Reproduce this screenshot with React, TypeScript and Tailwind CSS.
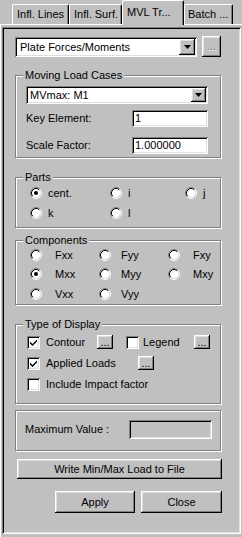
import React from "react";

const raised =
  "shadow-[inset_-1px_-1px_0_#000,inset_1px_1px_0_#fff,inset_-2px_-2px_0_#808080,inset_2px_2px_0_#dfdfdf]";
const sunken =
  "shadow-[inset_1px_1px_0_#808080,inset_-1px_-1px_0_#fff,inset_2px_2px_0_#000,inset_-2px_-2px_0_#dfdfdf]";
const etched = "border border-[#808080] shadow-[inset_1px_1px_0_#fff,1px_1px_0_#fff]";

function Radio({ checked }: { checked?: boolean }) {
  return (
    <svg width="12" height="12" viewBox="0 0 12 12" className="shrink-0 block">
      <circle cx="6" cy="6" r="4.5" fill="#fff" />
      <path d="M2.11 9.89A5.5 5.5 0 0 1 9.89 2.11" stroke="#808080" fill="none" />
      <path d="M2.82 9.18A4.5 4.5 0 0 1 9.18 2.82" stroke="#000" fill="none" />
      <path d="M9.89 2.11A5.5 5.5 0 0 1 2.11 9.89" stroke="#fff" fill="none" />
      <path d="M9.18 2.82A4.5 4.5 0 0 1 2.82 9.18" stroke="#dfdfdf" fill="none" />
      {checked && <circle cx="6" cy="6" r="2" fill="#000" />}
    </svg>
  );
}

function Check({ checked }: { checked?: boolean }) {
  return (
    <div className={`w-[13px] h-[13px] bg-white shrink-0 relative ${sunken}`}>
      {checked && (
        <svg className="absolute left-[3px] top-[3px]" width="7" height="7" viewBox="0 0 7 7">
          <path d="M0 2.5L2.5 5L7 0.5V2.5L2.5 7L0 4.5Z" fill="#000" />
        </svg>
      )}
    </div>
  );
}

function Arrow() {
  return (
    <svg width="7" height="4" viewBox="0 0 7 4" className="block">
      <polygon points="0,0 7,0 3.5,4" fill="#000" />
    </svg>
  );
}

function Dots({ disabled }: { disabled?: boolean }) {
  return (
    <span className={disabled ? "text-[#808080] [text-shadow:1px_1px_0_#fff]" : "text-black"}>...</span>
  );
}

function Group({
  label,
  className,
  children,
}: {
  label?: string;
  className: string;
  children: React.ReactNode;
}) {
  return (
    <div className={`relative w-[206px] ${etched} ${className}`}>
      {label && (
        <span className="absolute left-[7px] top-[-7px] px-[2px] bg-[#c0c0c0] leading-[13px]">{label}</span>
      )}
      {children}
    </div>
  );
}

export default function App() {
  return (
    <div className="w-[242px] h-[537px] bg-[#c0c0c0] overflow-hidden text-black text-[11px] leading-[13px] font-['Liberation_Sans',Arial,sans-serif]">
      {/* Tabs */}
      <div className="h-[24px] flex items-end pl-[12px]">
        <div className="h-[20px] w-[57px] border-t border-l border-white border-r border-r-black rounded-tl-[2px] rounded-tr-[2px] shadow-[inset_-1px_0_0_#808080] flex items-center pl-[4px] whitespace-nowrap">
          Infl. Lines
        </div>
        <div className="h-[20px] w-[53px] border-t border-l border-white border-r border-r-black rounded-tl-[2px] rounded-tr-[2px] shadow-[inset_-1px_0_0_#808080] flex items-center pl-[4px] whitespace-nowrap">
          Infl. Surf.
        </div>
        <div className="relative z-10 h-[25px] w-[62px] mb-[-1px] bg-[#c0c0c0] border-t border-l border-white border-r border-r-black rounded-tl-[2px] rounded-tr-[2px] shadow-[inset_-1px_0_0_#808080] pt-[5px] pl-[4px] whitespace-nowrap">
          MVL Tr...
        </div>
        <div className="h-[20px] w-[49px] border-t border-l border-white border-r border-r-black rounded-tl-[2px] rounded-tr-[2px] shadow-[inset_-1px_0_0_#808080] flex items-center pl-[3px] whitespace-nowrap">
          Batch ...
        </div>
      </div>

      {/* Page */}
      <div className="h-[513px] border-t border-l border-white pl-[1px] pt-[2px]">
        <div className={`w-[239px] h-[507px] ${sunken} pl-[13px] pt-[9px] flex flex-col`}>
          {/* Top combo row */}
          <div className="flex items-start h-[21px]">
            <div className={`mt-[1px] w-[182px] h-[20px] bg-white ${sunken} p-[2px] flex`}>
              <div className="flex-1 flex items-center pl-[3px] whitespace-nowrap">Plate Forces/Moments</div>
              <div className={`w-[16px] h-full bg-[#c0c0c0] ${raised} flex items-center justify-center`}>
                <Arrow />
              </div>
            </div>
            <div className={`ml-[5px] w-[19px] h-[21px] ${raised} flex items-center justify-center`}>
              <Dots disabled />
            </div>
          </div>

          {/* Moving Load Cases */}
          <Group label="Moving Load Cases" className="mt-[18px] h-[83px]">
            <div className="flex flex-col pl-[10px] pt-[10px]">
              <div className={`w-[182px] h-[18px] bg-white ${sunken} p-[2px] flex`}>
                <div className="flex-1 flex items-center pl-[2px] whitespace-nowrap">MVmax: M1</div>
                <div className={`w-[15px] h-full bg-[#c0c0c0] ${raised} flex items-center justify-center`}>
                  <Arrow />
                </div>
              </div>
              <div className="mt-[6px] w-[182px] h-[17px] flex items-center justify-between">
                <span>Key Element:</span>
                <div className={`w-[76px] h-[17px] bg-white ${sunken} flex items-center pl-[3px]`}>1</div>
              </div>
              <div className="mt-[10px] w-[182px] h-[17px] flex items-center justify-between">
                <span>Scale Factor:</span>
                <div className={`w-[76px] h-[17px] bg-white ${sunken} flex items-center pl-[3px]`}>1.000000</div>
              </div>
            </div>
          </Group>

          {/* Parts */}
          <Group label="Parts" className="mt-[19px] h-[51px]">
            <div className="grid grid-cols-[80px_75px_1fr] gap-y-[6px] pl-[14px] pt-[8px]">
              <div className="h-[14px] flex items-center">
                <Radio checked />
                <span className="ml-[6px]">cent.</span>
              </div>
              <div className="h-[14px] flex items-center">
                <Radio />
                <span className="ml-[6px]">i</span>
              </div>
              <div className="h-[14px] flex items-center">
                <Radio />
                <span className="ml-[6px]">j</span>
              </div>
              <div className="h-[14px] flex items-center">
                <Radio />
                <span className="ml-[6px]">k</span>
              </div>
              <div className="h-[14px] flex items-center">
                <Radio />
                <span className="ml-[6px]">l</span>
              </div>
            </div>
          </Group>

          {/* Components */}
          <Group label="Components" className="mt-[12px] h-[65px]">
            <div className="flex flex-col pl-[14px] pt-[7px]">
              <div className="h-[14px] flex items-center">
                <div className="w-[69px] flex items-center">
                  <Radio />
                  <span className="ml-[13px]">Fxx</span>
                </div>
                <div className="w-[69px] flex items-center">
                  <Radio />
                  <span className="ml-[10px]">Fyy</span>
                </div>
                <div className="flex items-center">
                  <Radio />
                  <span className="ml-[13px]">Fxy</span>
                </div>
              </div>
              <div className="mt-[5px] h-[14px] flex items-center">
                <div className="w-[69px] flex items-center">
                  <Radio checked />
                  <span className="ml-[13px]">Mxx</span>
                </div>
                <div className="w-[69px] flex items-center">
                  <Radio />
                  <span className="ml-[10px]">Myy</span>
                </div>
                <div className="flex items-center">
                  <Radio />
                  <span className="ml-[13px]">Mxy</span>
                </div>
              </div>
              <div className="mt-[6px] h-[14px] flex items-center">
                <div className="w-[69px] flex items-center">
                  <Radio />
                  <span className="ml-[13px]">Vxx</span>
                </div>
                <div className="w-[69px] flex items-center">
                  <Radio />
                  <span className="ml-[10px]">Vyy</span>
                </div>
              </div>
            </div>
          </Group>

          {/* Type of Display */}
          <Group label="Type of Display" className="mt-[19px] h-[80px]">
            <div className="flex flex-col pl-[11px] pt-[10px]">
              <div className="h-[14px] flex items-center">
                <div className="w-[70px] flex items-center">
                  <Check checked />
                  <span className="ml-[6px]">Contour</span>
                </div>
                <div className={`w-[16px] h-[14px] ${raised} flex items-center justify-center leading-[10px]`}>
                  <Dots />
                </div>
                <div className="ml-[13px] w-[68px] flex items-center">
                  <Check />
                  <span className="ml-[4px]">Legend</span>
                </div>
                <div className={`w-[16px] h-[14px] ${raised} flex items-center justify-center leading-[10px]`}>
                  <Dots />
                </div>
              </div>
              <div className="mt-[7px] h-[14px] flex items-center">
                <div className="w-[111px] flex items-center">
                  <Check checked />
                  <span className="ml-[6px]">Applied Loads</span>
                </div>
                <div className={`w-[16px] h-[14px] ${raised} flex items-center justify-center leading-[10px]`}>
                  <Dots />
                </div>
              </div>
              <div className="mt-[7px] h-[14px] flex items-center">
                <Check />
                <span className="ml-[6px]">Include Impact factor</span>
              </div>
            </div>
          </Group>

          {/* Maximum value */}
          <Group className="mt-[6px] h-[41px]">
            <div className="flex items-center pl-[9px] pt-[9px]">
              <span className="w-[104px]">Maximum Value :</span>
              <div className={`w-[83px] h-[19px] bg-[#c0c0c0] ${sunken}`} />
            </div>
          </Group>

          <button
            className={`mt-[8px] ml-[2px] w-[205px] h-[20px] ${raised} flex items-center justify-center`}
          >
            Write Min/Max Load to File
          </button>

          <div className="mt-[12px] flex">
            <button className={`ml-[40px] w-[80px] h-[22px] ${raised} flex items-center justify-center`}>
              Apply
            </button>
            <button className={`ml-[6px] w-[81px] h-[22px] ${raised} flex items-center justify-center`}>
              Close
            </button>
          </div>
        </div>
      </div>
    </div>
  );
}
